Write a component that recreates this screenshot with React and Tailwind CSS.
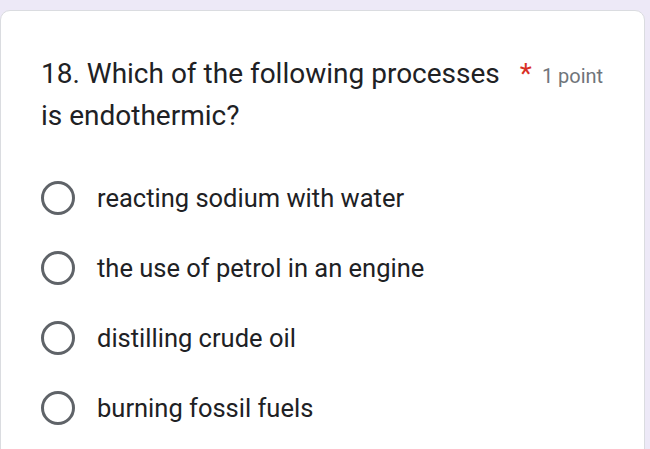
export default function App() {
  const options = [
    'reacting sodium with water',
    'the use of petrol in an engine',
    'distilling crude oil',
    'burning fossil fuels',
  ]

  return (
    <div className="h-[449px] w-[650px] overflow-hidden bg-[#ede9f7] pt-[10px] font-['Roboto',sans-serif]">
      <div className="h-[460px] w-[645px] rounded-[10px] border border-[#dadce0] bg-white pl-[40px] pr-[40px] pt-[43px]">
        <div className="text-[28px] leading-[40px] text-[#202124]">
          18. Which of the following processes
          <span className="ml-[20px] text-[#d93025]">*</span>
          <span className="ml-[10px] text-[20px] text-[#70757a]">1 point</span>
          <br />
          is endothermic?
        </div>

        <div className="mt-[45px] flex flex-col gap-[36px]">
          {options.map((label) => (
            <div key={label} className="flex h-[34px] items-center">
              <div className="h-[34px] w-[34px] shrink-0 rounded-full border-[3px] border-[#5f6368]" />
              <span className="ml-[22px] text-[25.5px] text-[#202124]">{label}</span>
            </div>
          ))}
        </div>
      </div>
    </div>
  )
}
